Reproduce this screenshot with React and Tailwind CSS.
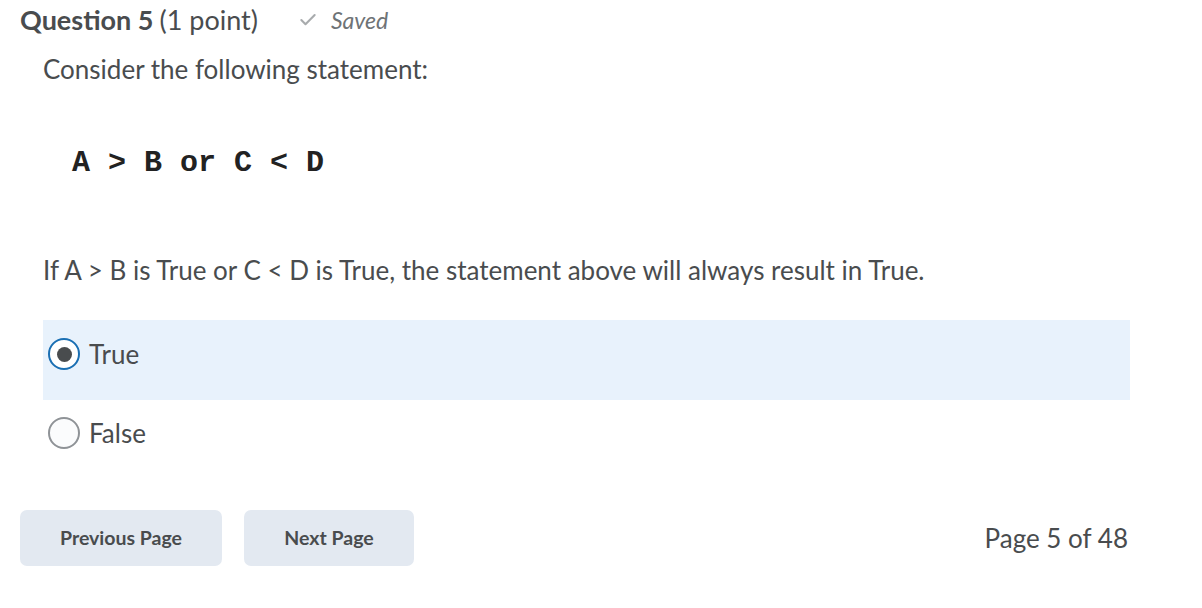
import { Check } from 'lucide-react';

function Radio({ checked }) {
  if (checked) {
    return (
      <span className="flex h-[32px] w-[32px] items-center justify-center rounded-full border-2 border-[#1a6fb3] bg-white">
        <span className="h-[15px] w-[15px] rounded-full bg-[#494c4e]" />
      </span>
    );
  }
  return <span className="h-[32px] w-[32px] rounded-full border-2 border-[#8f9397] bg-[#fbfcfd]" />;
}

export default function App() {
  return (
    <div className="h-[608px] w-[1202px] bg-white pl-[20px] text-[#494c4e] font-['Lato','Liberation_Sans',sans-serif]">
      <div className="flex h-[40px] items-center text-[27px]">
        <span className="font-bold">Question 5</span>
        <span className="ml-[6px]">(1 point)</span>
        <Check className="ml-[40px] h-[20px] w-[20px] text-[#a8abad]" strokeWidth={2.5} />
        <span className="ml-[13px] text-[23px] italic text-[#6e7376]">Saved</span>
      </div>

      <div className="ml-[23px] mr-[72px]">
        <p className="mt-[9px] text-[26px] leading-[40px]">Consider the following statement:</p>

        <p className="mt-[44px] ml-[29px] whitespace-pre text-[30px] font-bold leading-[60px] text-[#222] font-['Liberation_Mono','Courier_New',monospace]">
          A &gt; B or C &lt; D
        </p>

        <p className="mt-[57px] text-[26px] leading-[40px]">
          If A &gt; B is True or C &lt; D is True, the statement above will always result in True.
        </p>

        <div className="mt-[30px]">
          <label className="flex h-[80px] items-center gap-[9px] bg-[#e8f2fc] pb-[12px] pl-[5px] text-[26px]">
            <Radio checked />
            <span>True</span>
          </label>
          <label className="flex h-[68px] items-center gap-[9px] pl-[5px] text-[26px] pb-[2px]">
            <Radio />
            <span>False</span>
          </label>
        </div>
      </div>

      <div className="mt-[42px] mr-[74px] flex items-center">
        <button className="h-[56px] w-[202px] rounded-[7px] bg-[#e3e9f1] text-[19.5px] font-bold text-[#494c4e]">
          Previous Page
        </button>
        <button className="ml-[22px] h-[56px] w-[170px] rounded-[7px] bg-[#e3e9f1] text-[19.5px] font-bold text-[#494c4e]">
          Next Page
        </button>
        <span className="ml-auto text-[26px]">Page 5 of 48</span>
      </div>
    </div>
  );
}
